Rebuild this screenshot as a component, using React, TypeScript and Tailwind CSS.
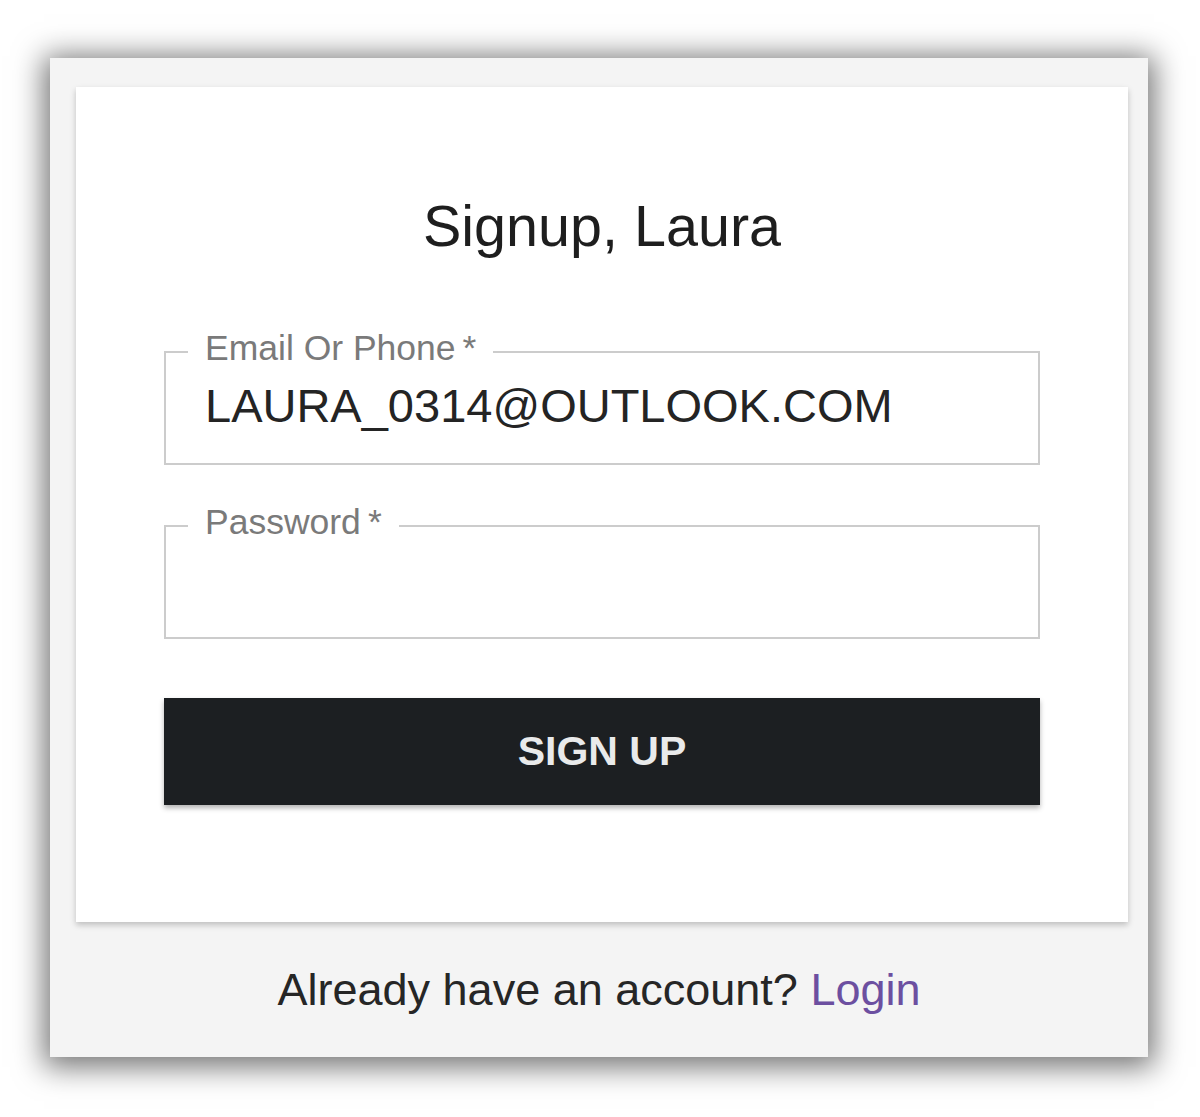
import type { ReactNode } from "react";

/* ─── Outlined field with a floating label ───────────────────────── */

function OutlinedField(args: { label: string; children?: ReactNode }) {
  return (
    <div className="relative h-[114px] border-2 border-[#cccccc] bg-white">
      <span className="absolute left-[22px] top-[-22px] bg-white px-[17px] text-[35.5px] leading-none text-[#7a7a7a]">
        {args.label}
        <span className="ml-[7px]">*</span>
      </span>
      <div className="pl-[39px] pt-[29px] text-[47px] leading-none text-[#242424]">
        {args.children}
      </div>
    </div>
  );
}

export default function App() {
  return (
    <div
      className="min-h-[1117px] w-[1200px] bg-white pt-[58px] pl-[50px]"
      style={{ fontFamily: '"Liberation Sans", Arial, sans-serif' }}
    >
      {/* Outer grey panel */}
      <div className="flex h-[999px] w-[1098px] flex-col bg-[#f4f4f4] shadow-[0_4px_28px_6px_rgba(0,0,0,0.55)]">
        {/* White card */}
        <div className="ml-[26px] mr-[20px] mt-[29px] h-[835px] bg-white px-[88px] pt-[111px] shadow-[0_3px_6px_rgba(0,0,0,0.22)]">
          <h1 className="text-center text-[57.5px] leading-none text-[#1e1e1e]">Signup, Laura</h1>

          <div className="mt-[95px]">
            <OutlinedField label="Email Or Phone">LAURA_0314@OUTLOOK.COM</OutlinedField>
          </div>

          <div className="mt-[60px]">
            <OutlinedField label="Password" />
          </div>

          <button
            type="button"
            className="mt-[59px] flex h-[107px] w-full items-center justify-center bg-[#1c1f22] text-[41px] font-bold leading-none text-[#e9eaeb] shadow-[0_3px_5px_rgba(0,0,0,0.3)]"
          >
            SIGN UP
          </button>
        </div>

        {/* Footer */}
        <div className="flex flex-1 items-center justify-center text-[45px] leading-none text-[#262626]">
          <span>
            Already have an account? <span className="text-[#6c4fa0]">Login</span>
          </span>
        </div>
      </div>
    </div>
  );
}
